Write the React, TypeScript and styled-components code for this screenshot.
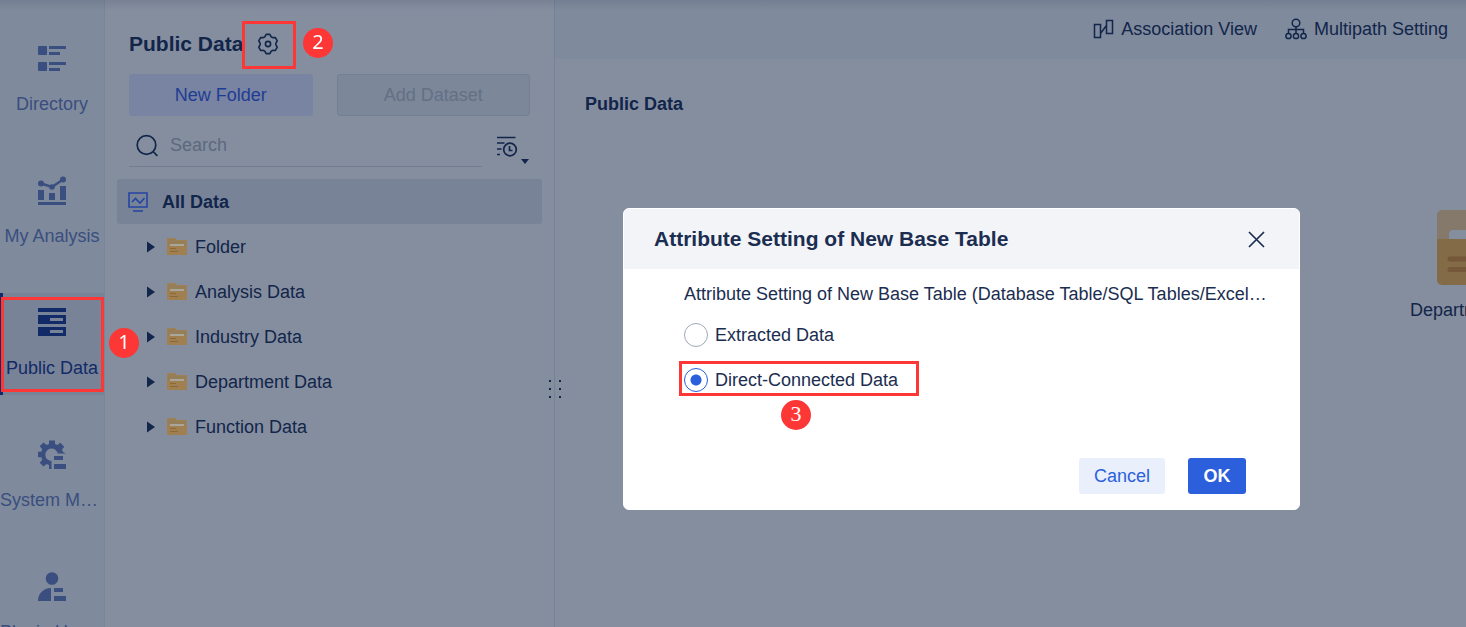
import React from "react";
import styled, { createGlobalStyle, css } from "styled-components";

const red = "#fd3636";
const ink = "#12254a";

const GlobalStyle = createGlobalStyle`
  *, *::before, *::after { box-sizing: border-box; }
  body {
    margin: 0;
    overflow: hidden;
    background: #858e9f;
    color: ${ink};
    font: 18px/24px "Liberation Sans", Arial, sans-serif;
  }
  button, input { font: inherit; color: inherit; }
  button { border: 0; padding: 0; background: none; cursor: pointer; }
  h1, h2, h3, p, ul { margin: 0; padding: 0; }
  ul { list-style: none; }
  svg { display: block; flex: none; }
`;

const Page = styled.div`
  position: relative;
  display: flex;
  height: 100vh;
  overflow: hidden;
`;

const TopShade = styled.div`
  position: absolute;
  inset: 0 0 auto 0;
  height: 10px;
  background: linear-gradient(rgba(40, 54, 88, 0.14), rgba(40, 54, 88, 0));
  pointer-events: none;
`;

const Nav = styled.nav`
  flex: none;
  width: 105px;
  display: flex;
  flex-direction: column;
  gap: 30px;
  padding-top: 29px;
  background: #7f8a9c;
  border-right: 1px solid #79849a;
`;

const NavItem = styled.a<{ $active?: boolean }>`
  flex: none;
  display: flex;
  flex-direction: column;
  align-items: center;
  gap: 18px;
  padding: 15px 0;
  color: #3a4e7f;
  text-decoration: none;
  ${(p) =>
    p.$active &&
    css`
      color: #122a68;
      background: #788397;
      box-shadow: inset 3px 0 #122a68;
    `}
`;

const NavLabel = styled.span<{ $clip?: boolean }>`
  width: 100%;
  white-space: nowrap;
  text-align: ${(p) => (p.$clip ? "left" : "center")};
`;

const Mark = styled.span<{ $inset: string; $w?: number; $h?: number }>`
  position: absolute;
  inset: ${(p) => p.$inset};
  width: ${(p) => (p.$w ? `${p.$w}px` : "auto")};
  height: ${(p) => (p.$h ? `${p.$h}px` : "auto")};
  border: 3px solid ${red};
  pointer-events: none;
`;

const Badge = styled.span<{ $x: number; $y: number; $serif?: boolean }>`
  position: absolute;
  left: ${(p) => p.$x}px;
  top: ${(p) => p.$y}px;
  z-index: 1;
  width: 30px;
  height: 30px;
  border-radius: 50%;
  background: ${red};
  color: #fff;
  font: ${(p) => (p.$serif ? '22px/28px "Liberation Serif", serif' : '20px/28px "Noto Sans", sans-serif')};
  text-align: center;
`;

const Side = styled.aside`
  position: relative;
  flex: none;
  width: 450px;
  padding: 23px 12px 0;
  border-right: 1px solid #75829a;
`;

const SideHead = styled.div`
  display: flex;
  align-items: center;
  gap: 14px;
  height: 42px;
  padding-left: 12px;
`;

const SideTitle = styled.h1`
  font-size: 21px;
  line-height: 24px;
`;

const Actions = styled.div`
  display: flex;
  gap: 24px;
  padding: 9px 12px 0;
`;

const Action = styled.button<{ $grow: number }>`
  flex: ${(p) => p.$grow} 1 0;
  height: 42px;
  border-radius: 3px;
  background: #7884a2;
  color: #1f3c94;
  &:disabled {
    background: #7c8799;
    border: 1px solid #748092;
    color: #637086;
  }
`;

const SearchRow = styled.div`
  display: flex;
  gap: 14px;
  padding: 9px 12px 0;
`;

const SearchBox = styled.label`
  flex: 1;
  display: flex;
  align-items: center;
  gap: 11px;
  height: 42px;
  padding: 0 0 1px 7px;
  border-bottom: 1px solid #717e90;
`;

const SearchInput = styled.input`
  flex: 1;
  min-width: 0;
  padding: 0;
  border: 0;
  outline: 0;
  background: none;
  &::placeholder { color: #5c697f; opacity: 1; }
`;

const SortButton = styled.button`
  height: 42px;
`;

const Tree = styled.ul`
  padding-top: 12px;
`;

const AllRow = styled.li`
  display: flex;
  align-items: center;
  gap: 14px;
  height: 45px;
  padding-left: 11px;
  border-radius: 3px;
  background: #788397;
  font-weight: bold;
`;

const TreeRow = styled.li`
  display: flex;
  align-items: center;
  height: 45px;
  padding-left: 30px;
`;

const TreeName = styled.span`
  padding-left: 8px;
`;

const Grip = styled.span`
  position: absolute;
  top: 379px;
  right: -9px;
`;

const Main = styled.main`
  flex: 1;
  min-width: 0;
  overflow: hidden;
`;

const Toolbar = styled.div`
  display: flex;
  justify-content: flex-end;
  gap: 28px;
  height: 59px;
  padding: 0 18px 2px 0;
  background: #7f8a9c;
`;

const Tool = styled.button`
  display: flex;
  align-items: center;
  gap: 7px;
  white-space: nowrap;
`;

const MainTitle = styled.h2`
  padding: 33px 30px 0;
  font-size: 18px;
  line-height: 24px;
`;

const Cards = styled.div`
  display: flex;
  justify-content: flex-end;
  margin-right: -81px;
  padding-top: 94px;
`;

const Card = styled.div`
  display: flex;
  flex-direction: column;
  align-items: center;
  gap: 12px;
  white-space: nowrap;
`;

const Overlay = styled.div`
  position: fixed;
  inset: 0;
  display: flex;
  align-items: flex-start;
  justify-content: flex-end;
  padding: 208px 166px 0 0;
`;

const Dialog = styled.section`
  width: 677px;
  max-width: 100%;
  border: 1px solid #fff;
  border-radius: 6px;
  background: #fff;
  color: #1b2d50;
`;

const DialogHead = styled.header`
  display: flex;
  align-items: center;
  justify-content: space-between;
  height: 60px;
  padding: 0 34px 0 30px;
  border-radius: 5px 5px 0 0;
  background: #f2f4f8;
`;

const DialogTitle = styled.h3`
  font-size: 21px;
  line-height: 24px;
`;

const DialogBody = styled.div`
  padding: 13px 32px 0 60px;
`;

const Note = styled.p`
  overflow: hidden;
  white-space: nowrap;
  text-overflow: ellipsis;
`;

const Options = styled.div`
  display: flex;
  flex-direction: column;
  align-items: flex-start;
  gap: 21px;
  padding-top: 17px;
`;

const Option = styled.label`
  position: relative;
  display: flex;
  align-items: center;
  gap: 7px;
  height: 24px;
`;

const Radio = styled.input`
  appearance: none;
  flex: none;
  width: 24px;
  height: 24px;
  margin: 0;
  border: 1px solid #a0a8b8;
  border-radius: 50%;
  &:checked {
    border-color: #2b5fdb;
    background: radial-gradient(circle, #2b5fdb 5px, transparent 6px);
  }
`;

const DialogFoot = styled.footer`
  display: flex;
  justify-content: flex-end;
  gap: 23px;
  padding: 66px 53px 15px;
`;

const FootButton = styled.button<{ $primary?: boolean }>`
  min-width: 58px;
  height: 36px;
  padding: 0 15px;
  border-radius: 3px;
  background: ${(p) => (p.$primary ? "#2b5fdb" : "#e9effb")};
  color: ${(p) => (p.$primary ? "#fff" : "#2b5fdb")};
  font-weight: ${(p) => (p.$primary ? "bold" : "normal")};
`;

const navIcon = { width: 30, height: 30, viewBox: "0 0 30 30", fill: "currentColor" };

const DirectoryIcon = () => (
  <svg {...navIcon}>
    <rect x="1" y="2" width="9" height="9" rx="1" />
    <rect x="12" y="2" width="17" height="3" />
    <rect x="12" y="8" width="11" height="3" />
    <rect x="1" y="18" width="9" height="9" rx="1" />
    <rect x="12" y="18" width="17" height="3" />
    <rect x="12" y="24" width="11" height="3" />
  </svg>
);

const AnalysisIcon = () => (
  <svg {...navIcon}>
    <path d="M1 14h6v10H1zM12 17h6v7h-6zM23 10h6v14h-6zM1 26h28v3H1z" />
    <path d="M4 7.500 15 11 26 3.500" fill="none" stroke="currentColor" strokeWidth="2.400" />
    <circle cx="4" cy="7.500" r="3" />
    <circle cx="15" cy="11" r="2.800" />
    <circle cx="26" cy="3.500" r="3" />
  </svg>
);

const PublicIcon = () => (
  <svg {...navIcon} fillRule="evenodd">
    <path d="M1 0h28v4H1zM1 7h28v9H1zM13 10v3h13v-3zM1 19h28v9H1zM13 22v3h13v-3z" />
  </svg>
);

const SystemIcon = () => (
  <svg {...navIcon}>
    <path d="M12 .5h6V4l2.500 1 2.800-2.300 4 4L25 9.500l1 2.500 3 1.500h-8.200a6.300 6.300 0 1 0-6.300 7.600V29H12v-4l-2.500-1-3 2.600-3.800-3.800 2.600-3-1-2.600H1v-5.500h3.300l1-2.500-2.600-3 3.800-3.800 3 2.600L12 4z" />
    <path d="M17 16h9v4h-9zM17 24h12v5H17z" />
  </svg>
);

const UserIcon = () => (
  <svg {...navIcon}>
    <circle cx="15" cy="6.500" r="6.300" />
    <path d="M14 16v13H1C1 21.500 6.500 16 14 16zM17 16h9v4h-9zM17 24h12v5H17z" />
  </svg>
);

const gearPoints = [0, 60, 120, 180, 240, 300]
  .flatMap((a) => [
    [a - 11, 9.8],
    [a + 11, 9.8],
    [a + 24, 7.9],
    [a + 36, 7.9],
  ])
  .map(([a, r]) => {
    const t = (a * Math.PI) / 180;
    return `${(11 + r * Math.sin(t)).toFixed(2)},${(11 - r * Math.cos(t)).toFixed(2)}`;
  })
  .join(" ");

const GearIcon = () => (
  <svg width="22" height="22" viewBox="0 0 22 22" fill="none" stroke="currentColor" strokeWidth="1.600" strokeLinejoin="round">
    <polygon points={gearPoints} />
    <circle cx="11" cy="11" r="2.600" />
  </svg>
);

const SearchIcon = () => (
  <svg width="23" height="23" viewBox="0 0 23 23" fill="none" stroke="currentColor" strokeWidth="1.700">
    <circle cx="10.500" cy="11" r="9.300" />
    <path d="m17 17.500 4.400 4.300" />
  </svg>
);

const SortIcon = () => (
  <svg width="34" height="42" viewBox="0 0 34 42" fill="none" stroke="currentColor" strokeWidth="1.700">
    <path d="M1 12.500h18.500M1 18h7.500M1 24h4.500M1 29.500h3" />
    <circle cx="14" cy="24.500" r="6.300" />
    <path d="M13.500 21v4.500h3" />
    <path d="M25 34h8l-4 5z" fill="currentColor" stroke="none" />
  </svg>
);

const BoardIcon = () => (
  <svg width="20" height="20" viewBox="0 0 20 20" fill="none" stroke="#2345a5" strokeWidth="1.600">
    <path d="M1 1h18v14H1zM5 19h10" />
    <path d="m4 10 3.500-3.500L12 11l4.500-5" />
  </svg>
);

const ArrowIcon = () => (
  <svg width="20" height="12" viewBox="0 0 20 12" fill="currentColor">
    <path d="M0 .5v11L8 6z" />
  </svg>
);

const FolderIcon = () => (
  <svg width="20" height="20" viewBox="0 0 20 20">
    <path d="M0 1h8l2 2h10v15H0z" fill="#a08050" />
    <path d="M1 2h6.500l2 2H19v4H1z" fill="#967f58" />
    <path d="M3 7h14v2H3z" fill="#aaa69c" />
    <path d="M3 11.500h6M3 14.500h8" stroke="#8c6934" />
  </svg>
);

const AssociationIcon = () => (
  <svg width="21" height="22" viewBox="0 0 21 22" fill="none" stroke="currentColor" strokeWidth="1.500">
    <path d="M1.500 6.500h6v13h-6zM13.500 2.500h6v13h-6zM7.500 15.500l6-8" />
  </svg>
);

const MultipathIcon = () => (
  <svg width="22" height="22" viewBox="0 0 22 22" fill="none" stroke="currentColor" strokeWidth="1.500">
    <circle cx="11" cy="5" r="3.800" />
    <path d="M11 9v6M3.500 15v-3.500h15V15" />
    <circle cx="3.500" cy="18" r="2.600" />
    <circle cx="11" cy="18" r="2.600" />
    <circle cx="18.500" cy="18" r="2.600" />
  </svg>
);

const BigFolderIcon = () => (
  <svg width="82" height="76" viewBox="0 0 82 76">
    <path d="M0 5a5 5 0 0 1 5-5h30l8 8h34a5 5 0 0 1 5 5v20H0z" fill="#84796a" />
    <path d="M12 30v-6a4 4 0 0 1 4-4h50a4 4 0 0 1 4 4v6z" fill="#858e9f" />
    <path d="M0 29h82v41a5 5 0 0 1-5 5H5a5 5 0 0 1-5-5z" fill="#836b47" />
    <path d="M13 49h32M13 59.500h32" stroke="#75573a" strokeWidth="5" strokeLinecap="round" />
  </svg>
);

const CloseIcon = () => (
  <svg width="17" height="17" viewBox="0 0 17 17" stroke="currentColor" strokeWidth="1.700">
    <path d="m1 1 15 15M16 1 1 16" />
  </svg>
);

const GripIcon = () => (
  <svg width="15" height="20" viewBox="0 0 15 20" fill="currentColor">
    {[1, 9, 17].map((y) => (
      <path key={y} d={`M1 ${y}h2v2H1zM11 ${y}h2v2h-2z`} />
    ))}
  </svg>
);

const folders = ["Folder", "Analysis Data", "Industry Data", "Department Data", "Function Data"];

export default function App() {
  return (
    <>
      <GlobalStyle />
      <Page>
        <Nav>
          <NavItem href="#directory">
            <DirectoryIcon />
            <NavLabel>Directory</NavLabel>
          </NavItem>
          <NavItem href="#analysis">
            <AnalysisIcon />
            <NavLabel>My Analysis</NavLabel>
          </NavItem>
          <NavItem href="#public" $active>
            <PublicIcon />
            <NavLabel>Public Data</NavLabel>
          </NavItem>
          <NavItem href="#system">
            <SystemIcon />
            <NavLabel $clip>System M…</NavLabel>
          </NavItem>
          <NavItem href="#plugin">
            <UserIcon />
            <NavLabel $clip>Plugin Us…</NavLabel>
          </NavItem>
        </Nav>
        <Side>
          <SideHead>
            <SideTitle>Public Data</SideTitle>
            <button aria-label="Settings">
              <GearIcon />
            </button>
          </SideHead>
          <Actions>
            <Action $grow={184}>New Folder</Action>
            <Action $grow={192} disabled>Add Dataset</Action>
          </Actions>
          <SearchRow>
            <SearchBox>
              <SearchIcon />
              <SearchInput type="text" placeholder="Search" aria-label="Search" />
            </SearchBox>
            <SortButton aria-label="Sort by time">
              <SortIcon />
            </SortButton>
          </SearchRow>
          <Tree>
            <AllRow>
              <BoardIcon />
              All Data
            </AllRow>
            {folders.map((name) => (
              <TreeRow key={name}>
                <ArrowIcon />
                <FolderIcon />
                <TreeName>{name}</TreeName>
              </TreeRow>
            ))}
          </Tree>
          <Grip>
            <GripIcon />
          </Grip>
        </Side>
        <Main>
          <Toolbar>
            <Tool>
              <AssociationIcon />
              Association View
            </Tool>
            <Tool>
              <MultipathIcon />
              Multipath Setting
            </Tool>
          </Toolbar>
          <MainTitle>Public Data</MainTitle>
          <Cards>
            <Card>
              <BigFolderIcon />
              Department Data
            </Card>
          </Cards>
        </Main>
        <TopShade />
        <Mark $inset="297px auto auto 1px" $w={103} $h={95} />
        <Mark $inset="21px auto auto 242px" $w={54} $h={48} />
        <Badge $x={109} $y={328}>1</Badge>
        <Badge $x={303} $y={28}>2</Badge>
      </Page>
      <Overlay>
        <Dialog role="dialog" aria-labelledby="dialog-title">
          <DialogHead>
            <DialogTitle id="dialog-title">Attribute Setting of New Base Table</DialogTitle>
            <button aria-label="Close">
              <CloseIcon />
            </button>
          </DialogHead>
          <DialogBody>
            <Note>Attribute Setting of New Base Table (Database Table/SQL Tables/Excel Dataset)</Note>
            <Options>
              <Option>
                <Radio type="radio" name="mode" />
                Extracted Data
              </Option>
              <Option>
                <Radio type="radio" name="mode" defaultChecked />
                Direct-Connected Data
                <Mark $inset="-7px -21px -4px -5px" />
                <Badge $x={97} $y={32} $serif>3</Badge>
              </Option>
            </Options>
          </DialogBody>
          <DialogFoot>
            <FootButton>Cancel</FootButton>
            <FootButton $primary>OK</FootButton>
          </DialogFoot>
        </Dialog>
      </Overlay>
    </>
  );
}
